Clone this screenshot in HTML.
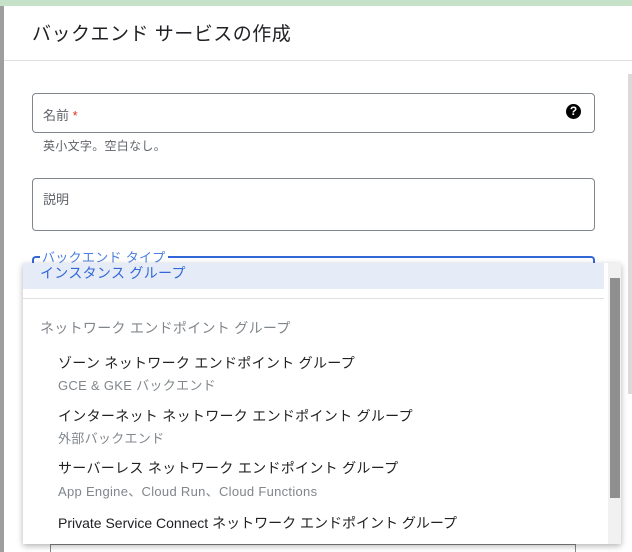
<!DOCTYPE html>
<html><head><meta charset="utf-8"><style>
*{margin:0;padding:0;box-sizing:border-box}
body{width:632px;height:552px;overflow:hidden;background:#fff;font-family:"Liberation Sans","Noto Sans CJK JP",sans-serif;position:relative}
.a{position:absolute}
.t{white-space:nowrap}
</style></head><body>
<div class="a" style="left:0;top:0;width:632px;height:6px;background:#c6e2c8"></div>
<div class="a" style="left:0;top:6px;width:4px;height:546px;background:#9e9e9e"></div>
<div class="a" style="left:4px;top:6px;width:628px;height:546px;background:#fff"></div>
<div class="a t" style="left:32px;top:19px;font-size:19px;letter-spacing:0.5px;color:#202124">バックエンド サービスの作成</div>
<div class="a" style="left:4px;top:60px;width:628px;height:1px;background:#e0e0e0"></div>
<div class="a" style="left:628px;top:74px;width:4px;height:320px;background:#dadada"></div>

<div class="a" style="left:32px;top:93px;width:563px;height:40px;border:1px solid #80868b;border-radius:4px"></div>
<div class="a t" style="left:43px;top:105px;font-size:13px;color:#5f6368">名前 <span style="color:#d93025">*</span></div>
<div class="a" style="left:566px;top:104px;width:15px;height:15px;border-radius:50%;background:#000;color:#fff;font-size:12px;font-weight:bold;text-align:center;line-height:15px">?</div>
<div class="a t" style="left:43px;top:137px;font-size:12px;color:#5f6368;letter-spacing:0.3px">英小文字。空白なし。</div>

<div class="a" style="left:32px;top:178px;width:563px;height:53px;border:1px solid #80868b;border-radius:4px"></div>
<div class="a t" style="left:43px;top:189px;font-size:13px;color:#5f6368">説明</div>

<div class="a" style="left:32px;top:256px;width:563px;height:30px;border:2px solid #3367d6;border-bottom:none;border-radius:4px 4px 0 0"></div>
<div class="a t" style="left:40px;top:247px;font-size:13px;color:#4a7fe0;background:#fff;padding:0 2px;letter-spacing:0.3px">バックエンド タイプ</div>

<div class="a" style="left:50px;top:544px;width:526px;height:8px;border:1px solid #888;border-bottom:none"></div>

<div class="a" style="left:23px;top:263px;width:598px;height:281px;background:#fff;box-shadow:0 2px 6px rgba(0,0,0,.3)">
  <div class="a" style="left:0;top:0;width:581px;height:26px;background:#e5ecf8"></div>
  <div class="a t" style="left:17px;top:0px;font-size:14px;color:#3367d6;letter-spacing:0.3px">インスタンス グループ</div>
  <div class="a" style="left:0;top:35px;width:581px;height:1px;background:#e0e0e0"></div>
  <div class="a t" style="left:17px;top:55px;font-size:14px;color:#80868b;letter-spacing:0.3px">ネットワーク エンドポイント グループ</div>
  <div class="a t" style="left:35px;top:90px;font-size:14px;color:#202124;letter-spacing:0.3px">ゾーン ネットワーク エンドポイント グループ</div>
  <div class="a t" style="left:35px;top:112px;font-size:13px;color:#80868b;letter-spacing:0.3px">GCE &amp; GKE バックエンド</div>
  <div class="a t" style="left:35px;top:143px;font-size:14px;color:#202124;letter-spacing:0.3px">インターネット ネットワーク エンドポイント グループ</div>
  <div class="a t" style="left:35px;top:165px;font-size:13px;color:#80868b;letter-spacing:0.3px">外部バックエンド</div>
  <div class="a t" style="left:35px;top:195px;font-size:14px;color:#202124;letter-spacing:0.3px">サーバーレス ネットワーク エンドポイント グループ</div>
  <div class="a t" style="left:35px;top:218px;font-size:13px;color:#80868b;letter-spacing:0.3px">App Engine、Cloud Run、Cloud Functions</div>
  <div class="a t" style="left:35px;top:250px;font-size:14px;color:#202124">Private Service Connect ネットワーク エンドポイント グループ</div>
  <div class="a" style="left:585px;top:0;width:13px;height:281px;background:#f1f1f1"></div>
  <div class="a" style="left:587px;top:15px;width:10px;height:220px;background:#8f8f8f"></div>
</div>
</body></html>
